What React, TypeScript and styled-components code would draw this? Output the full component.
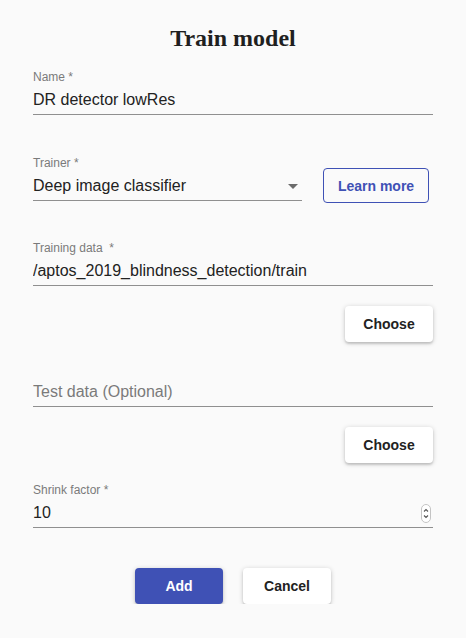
import styled, { createGlobalStyle } from 'styled-components';

const GlobalStyle = createGlobalStyle`
    body {
        margin: 0;
        background: #fafafa;
        font-family: "Liberation Sans", Arial, sans-serif;
    }
`;

const Page = styled.div`
    width: 466px;
    box-sizing: border-box;
    padding: 24px 33px 0;
    display: flex;
    flex-direction: column;
`;

const Title = styled.h1`
    margin: 0 0 18px;
    font-family: "Liberation Serif", "Times New Roman", serif;
    font-size: 24px;
    line-height: 28px;
    font-weight: 700;
    text-align: center;
    color: #1f1f1f;
`;

const Field = styled.div<{ $mt?: number }>`
    display: flex;
    flex-direction: column;
    flex: 1;
    margin-top: ${p => p.$mt ?? 0}px;
`;

const Label = styled.label<{ $hidden?: boolean }>`
    font-size: 12px;
    line-height: 14px;
    color: #7a7a7a;
    visibility: ${p => (p.$hidden ? 'hidden' : 'visible')};
    white-space: pre;
`;

const InputRow = styled.div`
    margin-top: 6px;
    height: 20px;
    display: flex;
    align-items: center;
    padding-bottom: 4px;
    border-bottom: 1px solid #8f8f8f;
`;

const Input = styled.input`
    flex: 1;
    min-width: 0;
    height: 20px;
    padding: 0;
    border: none;
    outline: none;
    background: transparent;
    font-family: "Liberation Sans", Arial, sans-serif;
    font-size: 16px;
    line-height: 20px;
    color: #222;

    &::placeholder {
        color: #7a7a7a;
        opacity: 1;
    }

    &::-webkit-outer-spin-button,
    &::-webkit-inner-spin-button {
        -webkit-appearance: none;
        margin: 0;
    }
`;

const Row = styled.div`
    display: flex;
    align-items: flex-start;
    gap: 21px;
    margin-top: 41px;
`;

const OutlineButton = styled.button`
    margin: 12px 4px -3px 0;
    width: 106px;
    height: 35px;
    border: 1px solid #3f51b5;
    border-radius: 4px;
    background: transparent;
    color: #3f51b5;
    font-family: "Liberation Sans", Arial, sans-serif;
    font-size: 14px;
    font-weight: 700;
    cursor: pointer;
`;

const Button = styled.button<{ $primary?: boolean }>`
    width: 88px;
    height: 36px;
    border: none;
    border-radius: 4px;
    background: ${p => (p.$primary ? '#3f51b5' : '#ffffff')};
    color: ${p => (p.$primary ? '#ffffff' : '#222222')};
    font-family: "Liberation Sans", Arial, sans-serif;
    font-size: 14px;
    font-weight: 700;
    box-shadow: 0 1px 5px rgba(0, 0, 0, 0.2), 0 2px 2px rgba(0, 0, 0, 0.12);
    cursor: pointer;
`;

const RightBar = styled.div`
    display: flex;
    justify-content: flex-end;
    margin-top: 20px;
`;

const Actions = styled.div`
    display: flex;
    justify-content: center;
    gap: 20px;
    margin-top: 40px;
`;

const DropArrow = () => (
    <svg width="10" height="5" viewBox="0 0 10 5" style={{ marginRight: 4 }}>
        <path d="M0 0 L10 0 L5 5 Z" fill="#6b6b6b" />
    </svg>
);

const Spinner = () => (
    <svg width="10" height="19" viewBox="0 0 10 19" style={{ marginRight: 2 }}>
        <rect x="0.5" y="0.5" width="9" height="18" rx="4.5" fill="#fff" stroke="#c4c4c4" />
        <path d="M3 7.5 L5 5.5 L7 7.5" fill="none" stroke="#555" strokeWidth="1.1" />
        <path d="M3 11.5 L5 13.5 L7 11.5" fill="none" stroke="#555" strokeWidth="1.1" />
    </svg>
);

const App = () => {
    return (
        <>
            <GlobalStyle />
            <Page>
                <Title>Train model</Title>

                <Field>
                    <Label>Name *</Label>
                    <InputRow>
                        <Input defaultValue="DR detector lowRes" />
                    </InputRow>
                </Field>

                <Row>
                    <Field>
                        <Label>Trainer *</Label>
                        <InputRow>
                            <Input defaultValue="Deep image classifier" readOnly />
                            <DropArrow />
                        </InputRow>
                    </Field>
                    <OutlineButton>Learn more</OutlineButton>
                </Row>

                <Field $mt={40}>
                    <Label>{'Training data  *'}</Label>
                    <InputRow>
                        <Input defaultValue="/aptos_2019_blindness_detection/train" />
                    </InputRow>
                </Field>
                <RightBar>
                    <Button>Choose</Button>
                </RightBar>

                <Field $mt={20}>
                    <Label $hidden>Test data</Label>
                    <InputRow>
                        <Input placeholder="Test data (Optional)" />
                    </InputRow>
                </Field>
                <RightBar>
                    <Button>Choose</Button>
                </RightBar>

                <Field $mt={20}>
                    <Label>Shrink factor *</Label>
                    <InputRow>
                        <Input type="number" defaultValue={10} />
                        <Spinner />
                    </InputRow>
                </Field>

                <Actions>
                    <Button $primary>Add</Button>
                    <Button>Cancel</Button>
                </Actions>
            </Page>
        </>
    );
};

export default App;
